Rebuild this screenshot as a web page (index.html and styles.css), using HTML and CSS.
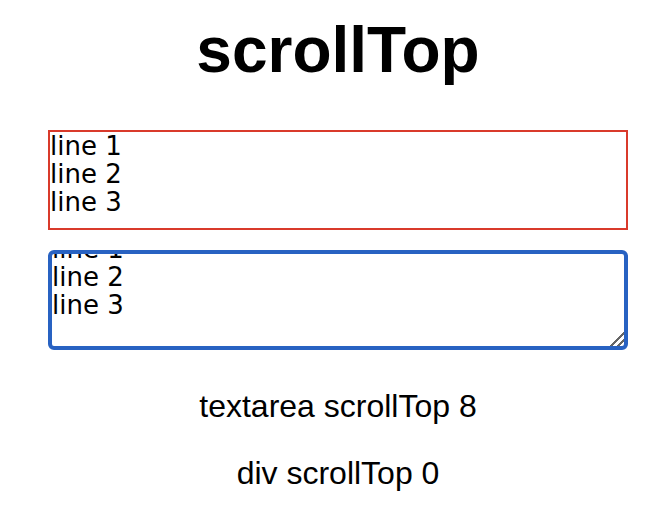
FILE: index.html
```html
<!DOCTYPE html>
<html lang="en">
<head>
    <meta charset="UTF-8">
    <meta name="viewport" content="width=device-width, initial-scale=1.0">
    <title>scrollTop</title>
    <link rel="stylesheet" href="styles.css">
</head>
<body>
    <div class="container">
        <h1>scrollTop</h1>

        <div class="box" id="box">line 1<br>line 2<br>line 3</div>

        <textarea class="area" id="area">line 1
line 2
line 3

</textarea>

        <div class="results">
            <p id="areaTop">textarea scrollTop 8</p>
            <p id="boxTop">div scrollTop 0</p>
        </div>
    </div>

    <script>
        // scroll the textarea a little so the first line is cut off
        document.getElementById('area').scrollTop = 19;
    </script>
</body>
</html>
```

FILE: styles.css
```css
body {
    margin: 0;
    padding: 0 0 0 10px;
    font-family: 'Liberation Sans', Arial, Helvetica, sans-serif;
    color: #000;
    background: #fff;
}
.container {
    width: 580px;
    margin: 0 auto;
    display: flex;
    flex-direction: column;
}
h1 {
    margin: 13px 0 43px;
    font-size: 64px;
    line-height: 74px;
    font-weight: bold;
    text-align: center;
}
.box {
    box-sizing: border-box;
    height: 100px;
    border: 2px solid #d93a2b;
    overflow: hidden;
    font-family: 'DejaVu Sans', Verdana, sans-serif;
    font-size: 26px;
    line-height: 28px;
}
.area {
    box-sizing: border-box;
    display: block;
    width: 580px;
    height: 100px;
    margin: 20px 0 0;
    padding: 0;
    border: 4px solid #2862c2;
    border-radius: 6px;
    overflow: hidden;
    resize: both;
    outline: none;
    color: #000;
    background: #fff;
    font-family: 'DejaVu Sans', Verdana, sans-serif;
    font-size: 26px;
    line-height: 28px;
}
.area::-webkit-resizer {
    background: linear-gradient(135deg,
        transparent 0 52%, #666 52% 60%,
        transparent 60% 76%, #666 76% 84%,
        transparent 84%);
}
.results {
    display: flex;
    flex-direction: column;
    gap: 30px;
    padding-top: 38px;
    text-align: center;
}
.results p {
    margin: 0;
    font-size: 32px;
    line-height: 37px;
}
```
